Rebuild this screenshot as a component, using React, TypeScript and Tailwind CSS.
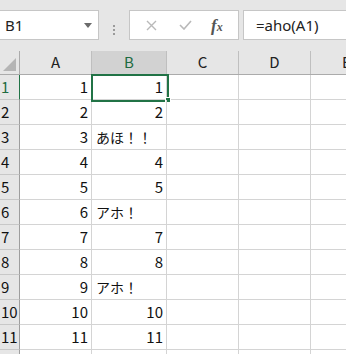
import React from 'react';

const COLS = [
  { key: 'A', w: 'w-[72px]' },
  { key: 'B', w: 'w-[75px]' },
  { key: 'C', w: 'w-[72px]' },
  { key: 'D', w: 'w-[72px]' },
  { key: 'E', w: 'w-[72px]' },
];

const ROWS: { a: string; b: string; text?: boolean }[] = [
  { a: '1', b: '1' },
  { a: '2', b: '2' },
  { a: '3', b: 'あほ！！', text: true },
  { a: '4', b: '4' },
  { a: '5', b: '5' },
  { a: '6', b: 'アホ！', text: true },
  { a: '7', b: '7' },
  { a: '8', b: '8' },
  { a: '9', b: 'アホ！', text: true },
  { a: '10', b: '10' },
  { a: '11', b: '11' },
  { a: '', b: '' },
];

const cellFont = { fontFamily: '"Noto Sans CJK JP", "Noto Sans", sans-serif' };

const FormulaBar = () => (
  <div className="flex h-[51px] bg-[#e6e6e6] pt-[10px]" style={{ fontFamily: '"Noto Sans", "Open Sans", sans-serif' }}>
    <div className="flex h-[30px] w-[99px] items-center justify-between border border-l-0 border-[#c6c6c6] bg-white pl-[5px] pr-[6px] text-[15px] text-[#222]">
      <span>B1</span>
      <svg width="8" height="5" viewBox="0 0 8 5">
        <path d="M0 0h8L4 5z" fill="#6b6b6b" />
      </svg>
    </div>
    <div className="flex w-[30px] flex-col items-center justify-center gap-[2px] pb-[2px]">
      <span className="h-[2px] w-[2px] bg-[#9a9a9a]" />
      <span className="h-[2px] w-[2px] bg-[#9a9a9a]" />
      <span className="h-[2px] w-[2px] bg-[#9a9a9a]" />
    </div>
    <div className="flex h-[30px] w-[110px] items-center border border-[#c6c6c6] bg-white">
      <svg className="ml-[16px]" width="11" height="11" viewBox="0 0 11 11">
        <path d="M1 1l9 9M10 1l-9 9" stroke="#b9b9b9" strokeWidth="1.4" />
      </svg>
      <svg className="ml-[22px]" width="13" height="10" viewBox="0 0 13 10">
        <path d="M1 5l4 4 7-8" stroke="#b9b9b9" strokeWidth="1.6" fill="none" />
      </svg>
      <span
        className="ml-[19px] text-[17px] font-bold italic leading-none text-[#555]"
        style={{ fontFamily: '"Liberation Serif", serif' }}
      >
        f<span className="text-[12px]">x</span>
      </span>
    </div>
    <div className="ml-[4px] flex h-[30px] flex-1 items-center border border-r-0 border-[#c6c6c6] bg-white pl-[12px] text-[15px] text-[#222]">
      =aho(A1)
    </div>
  </div>
);

const Header = () => (
  <div className="flex h-[24px] border-b border-[#ababab] bg-[#e6e6e6] text-[15px] text-[#222]" style={cellFont}>
    <div className="relative w-[20px] shrink-0 border-r border-[#ababab]">
      <svg className="absolute bottom-[3px] right-[3px]" width="13" height="13" viewBox="0 0 13 13">
        <path d="M13 0V13H0z" fill="#b5b5b5" />
      </svg>
    </div>
    {COLS.map((c) => (
      <div
        key={c.key}
        className={`${c.w} flex shrink-0 items-center justify-center border-r border-[#bfbfbf] ${
          c.key === 'B' ? 'bg-[#d2d2d2] text-[#1e6b41]' : ''
        }`}
      >
        {c.key}
      </div>
    ))}
  </div>
);

export default () => {
  return (
    <div className="h-[354px] w-[346px] overflow-hidden bg-white">
      <FormulaBar />
      <Header />
      {ROWS.map((r, i) => (
        <div key={i} className="flex h-[25px] text-[15px] text-[#111]" style={cellFont}>
          <div
            className={`flex w-[20px] shrink-0 items-center border-b border-r bg-[#e6e6e6] pl-[1px] ${
              i === 0 ? 'border-b-[#c8c8c8] border-r-[#217346] text-[#1e6b41]' : 'border-[#c8c8c8] border-r-[#9e9e9e]'
            }`}
          >
            {r.a ? String(i + 1) : ''}
          </div>
          <div className="flex w-[72px] shrink-0 items-center justify-end border-b border-r border-[#d4d4d4] pr-[3px]">
            {r.a}
          </div>
          <div
            className={`relative flex w-[75px] shrink-0 items-center border-b border-r border-[#d4d4d4] ${
              r.text ? 'justify-start whitespace-nowrap pl-[4px] text-[14px]' : 'justify-end pr-[3px]'
            }`}
          >
            {r.b}
            {i === 0 && (
              <>
                <div className="absolute -left-[1px] -top-[1px] h-[28px] w-[78px] border-2 border-[#217346]" />
                <div className="absolute left-[73px] top-[22px] h-[6px] w-[6px] border border-white bg-[#217346]" />
              </>
            )}
          </div>
          <div className="w-[72px] shrink-0 border-b border-r border-[#d4d4d4]" />
          <div className="w-[72px] shrink-0 border-b border-r border-[#d4d4d4]" />
          <div className="w-[72px] shrink-0 border-b border-r border-[#d4d4d4]" />
        </div>
      ))}
    </div>
  );
};
